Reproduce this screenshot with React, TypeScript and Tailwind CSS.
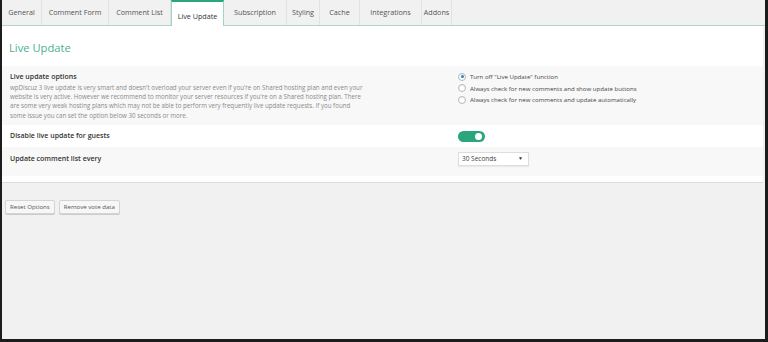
import React from "react";

const tabs = [
  { name: "General", w: 40 },
  { name: "Comment Form", w: 67 },
  { name: "Comment List", w: 62 },
  { name: "Live Update", w: 53, active: true },
  { name: "Subscription", w: 63 },
  { name: "Styling", w: 33 },
  { name: "Cache", w: 40 },
  { name: "Integrations", w: 62 },
  { name: "Addons", w: 30 },
];

function Radio({ checked, label }: { checked?: boolean; label: string }) {
  return (
    <div className="flex items-center h-[11.5px]">
      <span className="w-[8px] h-[8px] rounded-full border border-[#b4b9be] bg-white flex items-center justify-center shadow-[inset_0_1px_1px_rgba(0,0,0,0.08)]">
        {checked && <span className="w-[3px] h-[3px] rounded-full bg-[#1e8cbe]" />}
      </span>
      <span className="ml-[4px] text-[6.1px] text-[#444]">{label}</span>
    </div>
  );
}

export default function App() {
  return (
    <div
      className="w-[768px] h-[342px] bg-[#f1f1f1] border-r-[3px] border-b-[3px] border-l-[2px] border-[#1c1c1c] flex flex-col overflow-hidden"
      style={{ fontFamily: '"Open Sans", "Noto Sans", Arial, sans-serif' }}
    >
      {/* Tab bar */}
      <div className="h-[26px] flex bg-[#f1f1f1] border-b border-[#a8d8c6] shrink-0">
        {tabs.map((t) => (
          <div
            key={t.name}
            style={{ width: t.w }}
            className={
              t.active
                ? "h-[27px] -mb-[1px] bg-white border-t-[2px] border-t-[#2aa57c] border-x border-x-[#9fd6c2] flex items-center justify-center text-[7.2px] text-[#333] pt-[3px]"
                : "h-full border-r border-[#e2e2e2] flex items-center justify-center text-[7.2px] text-[#555]"
            }
          >
            {t.name}
          </div>
        ))}
      </div>

      {/* Main panel */}
      <div className="bg-white border-b border-[#dcdcdc] mr-[2px] shrink-0">
        <div className="h-[40px] flex items-center pl-[7px] pt-[5px]">
          <span className="text-[11.2px] text-[#4cb18e]">Live Update</span>
        </div>

        {/* Row 1 */}
        <div className="bg-[#f8f8f8] flex h-[59px]">
          <div className="w-[451px] pl-[8px] pt-[5px]">
            <div className="text-[7px] font-semibold text-[#333] leading-[11px]">Live update options</div>
            <div className="text-[6.2px] text-[#8a8a8a] leading-[9.2px] mt-[1px]">
              wpDiscuz 3 live update is very smart and doesn't overload your server even if you're on Shared hosting plan and even your
              <br />
              website is very active. However we recommend to monitor your server resources if you're on a Shared hosting plan. There
              <br />
              are some very weak hosting plans which may not be able to perform very frequently live update requests. If you found
              <br />
              some issue you can set the option below 30 seconds or more.
            </div>
          </div>
          <div className="pl-[5px] pt-[5px]">
            <Radio checked label={'Turn off "Live Update" function'} />
            <Radio label="Always check for new comments and show update buttons" />
            <Radio label="Always check for new comments and update automatically" />
          </div>
        </div>

        {/* Row 2 */}
        <div className="bg-white flex h-[22px] items-center">
          <div className="w-[456px] pl-[8px] text-[7px] font-semibold text-[#333] pt-[1px]">Disable live update for guests</div>
          <div className="w-[27px] h-[11px] rounded-full bg-[#2aa57c] flex items-center justify-end pr-[3px]">
            <span className="w-[7px] h-[7px] rounded-full bg-white" />
          </div>
        </div>

        {/* Row 3 */}
        <div className="bg-[#f8f8f8] flex h-[29px] items-start pt-[5px]">
          <div className="w-[456px] pl-[8px] text-[7px] font-semibold text-[#333] leading-[11px] pt-[1px]">Update comment list every</div>
          <div className="w-[71px] h-[14px] bg-white border border-[#dddddd] flex items-center justify-between pl-[3px] pr-[5px] shadow-[0_1px_1px_rgba(0,0,0,0.05)]">
            <span className="text-[6.5px] text-[#444]">30 Seconds</span>
            <span className="text-[5px] text-[#333]">▼</span>
          </div>
        </div>
        <div className="h-[6px] bg-white" />
      </div>

      {/* Buttons */}
      <div className="flex gap-[4px] pl-[3px] pt-[17px]">
        <div className="h-[14px] px-[4px] bg-[#f7f7f7] border border-[#d4d4d4] rounded-[2px] flex items-center text-[6.1px] text-[#555] shadow-[0_1px_0_#ccc]">
          Reset Options
        </div>
        <div className="h-[14px] px-[4px] bg-[#f7f7f7] border border-[#d4d4d4] rounded-[2px] flex items-center text-[6.1px] text-[#555] shadow-[0_1px_0_#ccc]">
          Remove vote data
        </div>
      </div>
    </div>
  );
}
